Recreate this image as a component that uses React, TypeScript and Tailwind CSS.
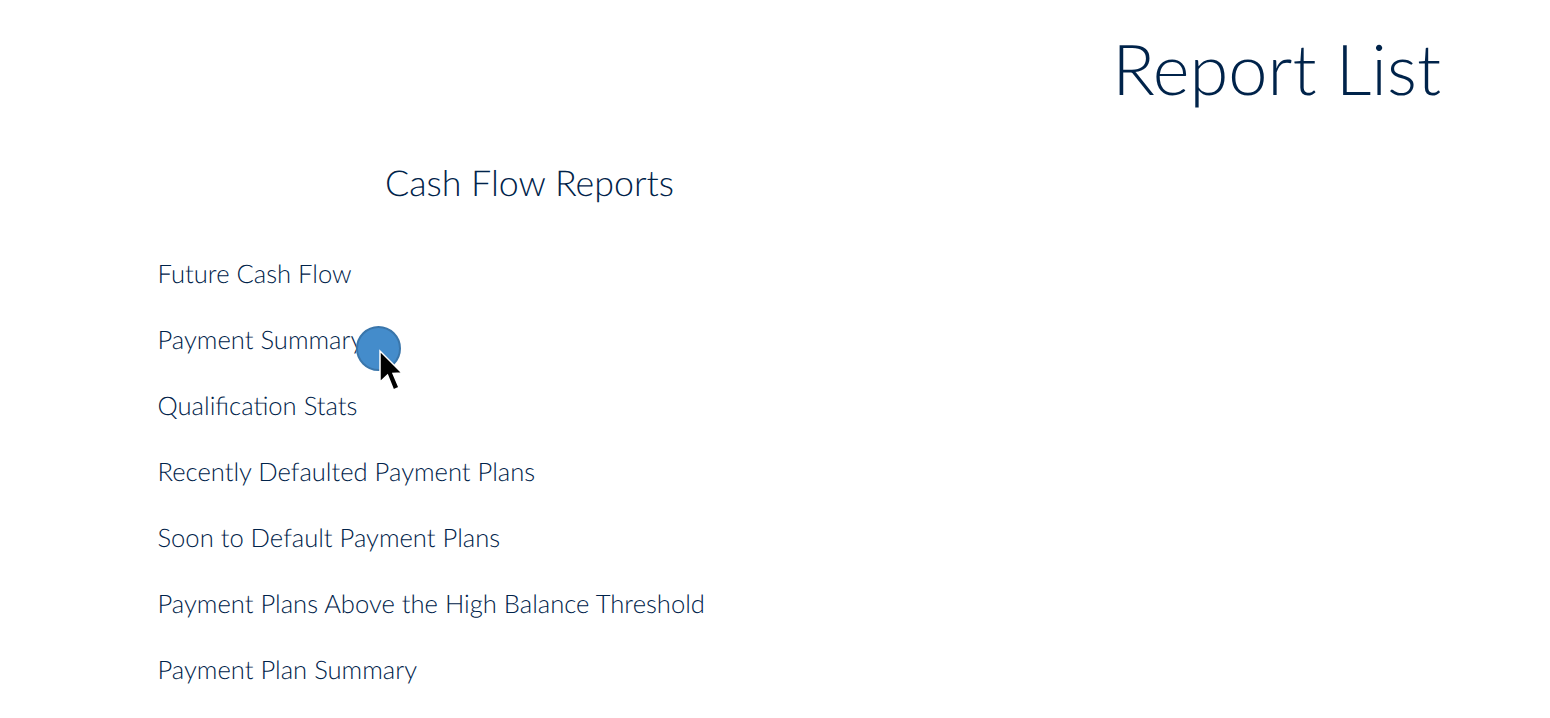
const reports = [
  'Future Cash Flow',
  'Payment Summary',
  'Qualification Stats',
  'Recently Defaulted Payment Plans',
  'Soon to Default Payment Plans',
  'Payment Plans Above the High Balance Threshold',
  'Payment Plan Summary',
];

function Cursor() {
  return (
    <div className="absolute left-[356px] top-[326px] w-[46px] h-[66px]">
      <div className="w-[45px] h-[45px] rounded-full bg-[#448ccb] border-2 border-[#3a76ab]" />
      <svg className="absolute left-[22px] top-[23px]" width="26" height="44" viewBox="0 0 26 44">
        <path d="M2 2 L2 33 L9.5 26 L15.5 41 L21 38.5 L15 24.5 L24 24 Z" fill="#000" stroke="#fff" strokeWidth="1.5" />
      </svg>
    </div>
  );
}

export default function App() {
  return (
    <div className="relative w-[1550px] h-[718px] overflow-hidden bg-white text-[#00234a] font-['Lato','Open_Sans',sans-serif] font-light [text-rendering:geometricPrecision]">
      <h1 className="text-right text-[70.4px] leading-[86px] font-light pr-[109px] pt-[25px]">Report List</h1>
      <div className="w-[1059px] text-center text-[35.8px] mt-[50px] leading-[44px]">Cash Flow Reports</div>
      <ul className="pl-[157.5px] mt-[53px] flex flex-col gap-[33px]">
        {reports.map((r) => (
          <li key={r} className="text-[25.6px] leading-[33px]">{r}</li>
        ))}
      </ul>
      <Cursor />
    </div>
  );
}
